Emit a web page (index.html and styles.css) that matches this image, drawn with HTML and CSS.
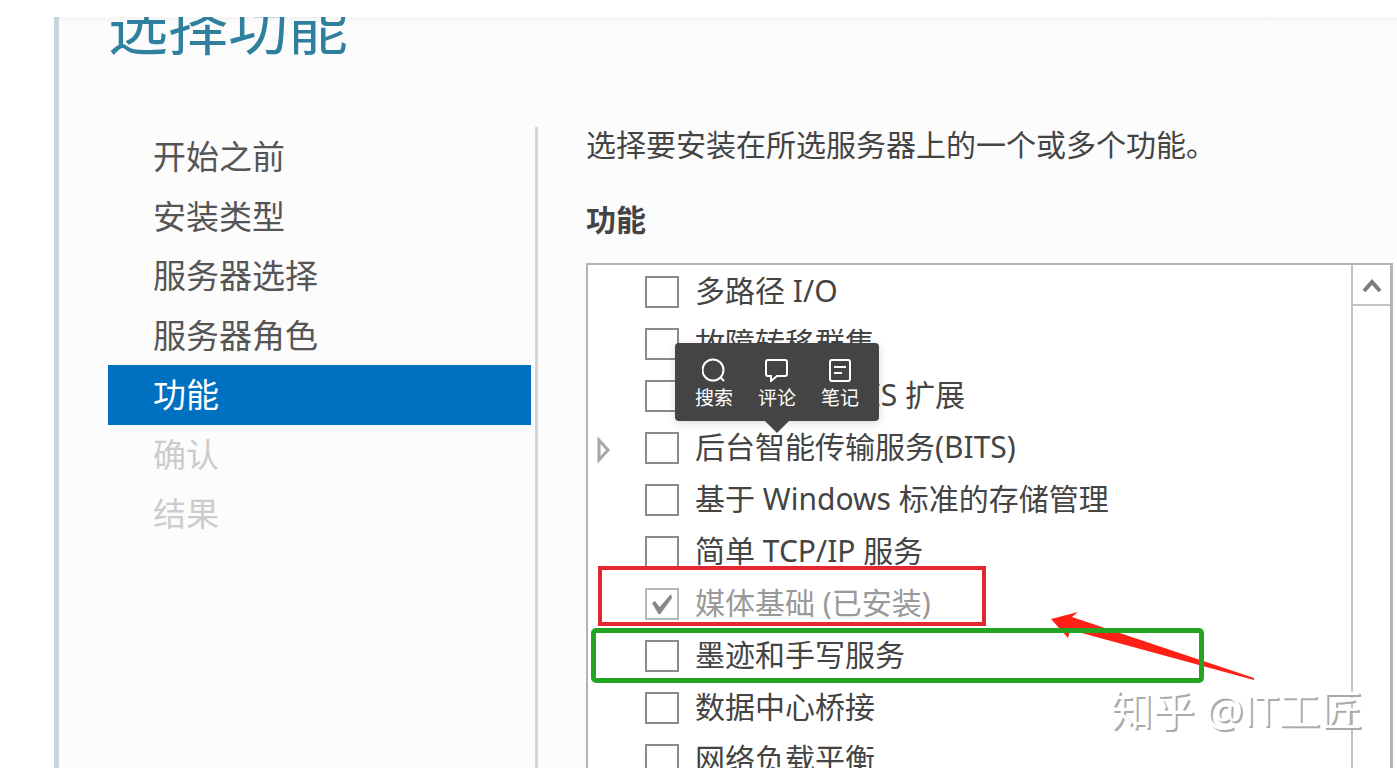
FILE: index.html
```
<!DOCTYPE html>
<html lang="zh-CN">
<head>
    <meta charset="utf-8">
    <title>选择功能</title>
    <link rel="stylesheet" href="styles.css">
</head>
<body>
    <div class="wizard">
        <header class="title-bar">
            <h1>选择功能</h1>
        </header>

        <div class="columns">
            <!-- Wizard steps -->
            <nav class="steps">
                <a href="#">开始之前</a>
                <a href="#">安装类型</a>
                <a href="#">服务器选择</a>
                <a href="#">服务器角色</a>
                <a href="#" class="active">功能</a>
                <a class="disabled">确认</a>
                <a class="disabled">结果</a>
            </nav>

            <main class="content">
                <p class="intro">选择要安装在所选服务器上的一个或多个功能。</p>
                <h2>功能</h2>

                <div class="feature-box">
                    <ul class="features">
                        <li><label><input type="checkbox">多路径 I/O</label></li>
                        <li><label><input type="checkbox">故障转移群集</label></li>
                        <li><label><input type="checkbox">管理 OData IIS 扩展</label></li>
                        <li>
                            <svg class="expander" width="14" height="26" viewBox="0 0 14 26"><path d="M2 3v20l9-10z" fill="#fff" stroke="#a8a8a8" stroke-width="3"/></svg>
                            <label><input type="checkbox">后台智能传输服务(BITS)</label>
                        </li>
                        <li><label><input type="checkbox">基于 Windows 标准的存储管理</label></li>
                        <li><label><input type="checkbox">简单 TCP/IP 服务</label></li>
                        <li><label class="installed"><input type="checkbox" checked disabled>媒体基础 (已安装)</label></li>
                        <li><label><input type="checkbox">墨迹和手写服务</label></li>
                        <li><label><input type="checkbox">数据中心桥接</label></li>
                        <li><label><input type="checkbox">网络负载平衡</label></li>
                    </ul>

                    <div class="scrollbar">
                        <button type="button" aria-label="向上滚动">
                            <svg width="22" height="16" viewBox="0 0 22 16"><path d="M3 14l8-9 8 9" fill="none" stroke="#7c7c7c" stroke-width="4"/></svg>
                        </button>
                        <div class="track"></div>
                        <button type="button" aria-label="向下滚动"></button>
                    </div>

                    <!-- Marks drawn over the list -->
                    <div class="mark mark-red"></div>
                    <svg class="arrow" width="206" height="72" viewBox="0 0 206 72"><path d="M1 8L28 1l-6 5L204 67v2L28 21l-8-1-2 7z" fill="#fe2015"/></svg>
                    <div class="mark mark-green"></div>

                    <!-- Selection menu -->
                    <div class="popup">
                        <button type="button">
                            <svg width="24" height="24" viewBox="0 0 24 24"><circle cx="11" cy="12" r="10.500"/><path d="M18.500 19.500l3.500 3.500"/></svg>
                            搜索
                        </button>
                        <button type="button">
                            <svg width="24" height="24" viewBox="0 0 24 24"><path d="M3 2h17q2 0 2 2v12q0 2-2 2h-8l-6 5v-5H3q-2 0-2-2V4q0-2 2-2z"/></svg>
                            评论
                        </button>
                        <button type="button">
                            <svg width="24" height="24" viewBox="0 0 24 24"><rect x="2" y="2" width="20" height="21" rx="2"/><path d="M6 9h12M6 15h8"/></svg>
                            笔记
                        </button>
                    </div>

                    <span class="watermark">知乎 @IT工匠</span>
                </div>
            </main>
        </div>
    </div>
</body>
</html>
```
FILE: styles.css
```
* {
    box-sizing: border-box;
}

body {
    margin: 0;
    padding: 17px 0 0 54px;
    height: 100vh;
    overflow: hidden;
    background-color: #fff;
    color: #444;
    font-family: "Noto Sans", "Noto Sans CJK SC", sans-serif;
}

.wizard {
    display: flex;
    flex-direction: column;
    height: 100%;
    overflow: hidden;
    padding: 0 4px 0 49px;
    border-left: 5px solid #c6d6da;
    background: linear-gradient(#f4f4f4, #fcfcfc 6px);
}

/* Heading, cut off by the top edge */
.title-bar {
    display: flex;
    height: 110px;
    flex-shrink: 0;
}

h1 {
    margin: -20px 0 0;
    font-size: 60px;
    line-height: 60px;
    font-weight: 400;
    color: #2f7f9f;
}

.columns {
    display: flex;
    flex: 1;
    min-height: 0;
}

/* Steps on the left */
.steps {
    display: grid;
    grid-template-rows: 60px 59px 60px 59px 60px 59px 60px;
    width: 430px;
    flex-shrink: 0;
    padding-right: 4px;
    border-right: 3px solid #d2d6d8;
}

.steps a {
    padding-left: 45px;
    font-size: 33px;
    line-height: 60px;
    color: #555;
    text-decoration: none;
}

.steps .active {
    background-color: #0071c0;
    color: #fff;
}

.steps .disabled {
    color: #ccc;
}

/* Feature list */
.content {
    display: flex;
    flex-direction: column;
    flex: 1;
    padding-left: 48px;
}

.intro {
    margin: 0;
    font-size: 30px;
    line-height: 36px;
}

h2 {
    margin: 39px 0 25px;
    font-size: 30px;
    line-height: 36px;
    font-weight: bold;
}

.feature-box {
    position: relative;
    display: flex;
    flex: 1;
    border: 2px solid #b4b4b4;
    border-right-width: 3px;
    border-bottom: 0;
    background-color: #fff;
}

.features {
    flex: 1;
    margin: 0;
    padding: 0;
    list-style: none;
}

.features li {
    position: relative;
    display: flex;
    height: 52px;
    padding-left: 57px;
}

.features label {
    display: flex;
    align-items: center;
    gap: 16px;
    font-size: 30px;
    line-height: 52px;
}

.expander {
    position: absolute;
    left: 9px;
    top: 16px;
}

input[type="checkbox"] {
    appearance: none;
    width: 34px;
    height: 32px;
    margin: 2px 0 0;
    border: 2px solid #8a8a8a;
    background-color: #fff;
}

.installed {
    color: #999;
}

.installed input[type="checkbox"] {
    display: grid;
    place-items: center;
    border-color: #b8b8b8;
}

.installed input::before {
    content: "";
    width: 20px;
    height: 20px;
    background-color: #888;
    clip-path: polygon(0 45%, 15% 35%, 38% 65%, 95% 0, 100% 20%, 42% 100%, 32% 100%);
}

/* Scrollbar */
.scrollbar {
    display: flex;
    flex-direction: column;
    width: 39px;
    border-left: 2px solid #c4c4c4;
}

.scrollbar button {
    display: grid;
    place-items: center;
    height: 41px;
    padding: 0;
    border: 0;
    border-bottom: 2px solid #c4c4c4;
    background-color: #fff;
}

.track {
    flex: 1;
}

.scrollbar button:last-child {
    height: 3px;
    border-top: 3px solid #b4b4b4;
    border-bottom: 0;
}

/* Marks */
.mark {
    position: absolute;
}

.mark-red {
    left: 10px;
    top: 301px;
    width: 388px;
    height: 60px;
    border: 4px solid #e3262f;
}

.mark-green {
    left: 3px;
    top: 363px;
    width: 613px;
    height: 55px;
    border: 5px solid #23a523;
    border-radius: 5px;
}

.arrow {
    position: absolute;
    left: 462px;
    top: 346px;
}

/* Selection menu */
.popup {
    position: absolute;
    left: 87px;
    top: 78px;
    display: flex;
    justify-content: center;
    gap: 25px;
    width: 204px;
    height: 78px;
    border-radius: 4px;
    background-color: #444;
    box-shadow: 0 2px 8px rgba(0, 0, 0, 0.15);
}

.popup::after {
    content: "";
    position: absolute;
    left: 90px;
    top: 100%;
    border: 12px solid transparent;
    border-top-color: #444;
    border-bottom: 0;
}

.popup button {
    display: flex;
    flex-direction: column;
    align-items: center;
    gap: 3px;
    padding: 15px 0 0;
    border: 0;
    background: none;
    color: #fff;
    font-family: inherit;
    font-size: 19px;
    line-height: 26px;
}

.popup svg {
    fill: none;
    stroke: #fff;
    stroke-width: 2;
}

.watermark {
    position: absolute;
    right: 28px;
    bottom: 50px;
    font-family: "Open Sans", "Noto Sans CJK SC", sans-serif;
    font-size: 42px;
    line-height: 50px;
    color: #fff;
    text-shadow: 2px 2px 0 #aaa;
}
```
